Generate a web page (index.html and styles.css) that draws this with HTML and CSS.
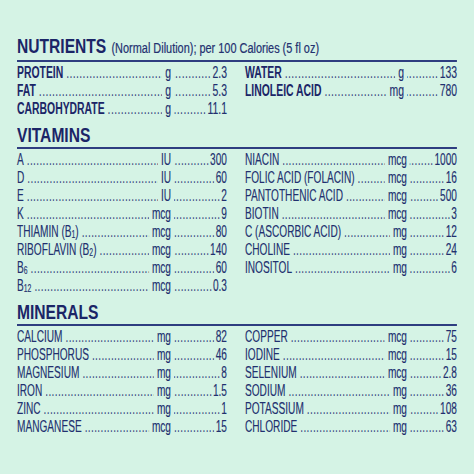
FILE: index.html
```html
<!DOCTYPE html>
<html lang="en">
<head>
<meta charset="utf-8">
<title>Nutrients</title>
<link rel="stylesheet" href="styles.css">
</head>
<body>
<main class="sheet">

  <h2 class="head scaled s-head first"><b class="title">NUTRIENTS</b> <span class="subtitle">(Normal Dilution); per 100 Calories (5 fl oz)</span></h2>
  <div class="list list-n scaled s-bold">
    <div class="col col-l">
      <div class="row"><span class="lead"><b class="name">PROTEIN</b><span class="dots"></span><span class="unit">g</span></span><span class="tail"><span class="dots r"></span><span class="val">2.3</span></span></div>
      <div class="row"><span class="lead"><b class="name">FAT</b><span class="dots"></span><span class="unit">g</span></span><span class="tail"><span class="dots r"></span><span class="val">5.3</span></span></div>
      <div class="row"><span class="lead"><b class="name">CARBOHYDRATE</b><span class="dots"></span><span class="unit">g</span></span><span class="tail"><span class="dots r"></span><span class="val">11.1</span></span></div>
    </div>
    <div class="col col-r">
      <div class="row"><span class="lead"><b class="name">WATER</b><span class="dots"></span><span class="unit">g</span></span><span class="tail"><span class="dots r"></span><span class="val">133</span></span></div>
      <div class="row"><span class="lead"><b class="name">LINOLEIC ACID</b><span class="dots"></span><span class="unit">mg</span></span><span class="tail"><span class="dots r"></span><span class="val">780</span></span></div>
    </div>
  </div>

  <h2 class="head scaled s-head"><b class="title">VITAMINS</b></h2>
  <div class="list scaled s-list">
    <div class="col col-l">
      <div class="row"><span class="lead"><span class="name">A</span><span class="dots"></span><span class="unit">IU</span></span><span class="tail"><span class="dots r"></span><span class="val">300</span></span></div>
      <div class="row"><span class="lead"><span class="name">D</span><span class="dots"></span><span class="unit">IU</span></span><span class="tail"><span class="dots r"></span><span class="val">60</span></span></div>
      <div class="row"><span class="lead"><span class="name">E</span><span class="dots"></span><span class="unit">IU</span></span><span class="tail"><span class="dots r"></span><span class="val">2</span></span></div>
      <div class="row"><span class="lead"><span class="name">K</span><span class="dots"></span><span class="unit">mcg</span></span><span class="tail"><span class="dots r"></span><span class="val">9</span></span></div>
      <div class="row"><span class="lead"><span class="name">THIAMIN (B<sub class="ss">1</sub>)</span><span class="dots"></span><span class="unit">mcg</span></span><span class="tail"><span class="dots r"></span><span class="val">80</span></span></div>
      <div class="row"><span class="lead"><span class="name">RIBOFLAVIN (B<sub class="ss">2</sub>)</span><span class="dots"></span><span class="unit">mcg</span></span><span class="tail"><span class="dots r"></span><span class="val">140</span></span></div>
      <div class="row"><span class="lead"><span class="name">B<sub class="ss">6</sub></span><span class="dots"></span><span class="unit">mcg</span></span><span class="tail"><span class="dots r"></span><span class="val">60</span></span></div>
      <div class="row"><span class="lead"><span class="name">B<sub class="ss">12</sub></span><span class="dots"></span><span class="unit">mcg</span></span><span class="tail"><span class="dots r"></span><span class="val">0.3</span></span></div>
    </div>
    <div class="col col-r">
      <div class="row"><span class="lead"><span class="name">NIACIN</span><span class="dots"></span><span class="unit">mcg</span></span><span class="tail"><span class="dots r"></span><span class="val">1000</span></span></div>
      <div class="row"><span class="lead"><span class="name">FOLIC ACID (FOLACIN)</span><span class="dots"></span><span class="unit">mcg</span></span><span class="tail"><span class="dots r"></span><span class="val">16</span></span></div>
      <div class="row"><span class="lead"><span class="name">PANTOTHENIC ACID</span><span class="dots"></span><span class="unit">mcg</span></span><span class="tail"><span class="dots r"></span><span class="val">500</span></span></div>
      <div class="row"><span class="lead"><span class="name">BIOTIN</span><span class="dots"></span><span class="unit">mcg</span></span><span class="tail"><span class="dots r"></span><span class="val">3</span></span></div>
      <div class="row"><span class="lead"><span class="name">C (ASCORBIC ACID)</span><span class="dots"></span><span class="unit">mg</span></span><span class="tail"><span class="dots r"></span><span class="val">12</span></span></div>
      <div class="row"><span class="lead"><span class="name">CHOLINE</span><span class="dots"></span><span class="unit">mg</span></span><span class="tail"><span class="dots r"></span><span class="val">24</span></span></div>
      <div class="row"><span class="lead"><span class="name">INOSITOL</span><span class="dots"></span><span class="unit">mg</span></span><span class="tail"><span class="dots r"></span><span class="val">6</span></span></div>
    </div>
  </div>

  <h2 class="head scaled s-head"><b class="title">MINERALS</b></h2>
  <div class="list scaled s-list">
    <div class="col col-l">
      <div class="row"><span class="lead"><span class="name">CALCIUM</span><span class="dots"></span><span class="unit">mg</span></span><span class="tail"><span class="dots r"></span><span class="val">82</span></span></div>
      <div class="row"><span class="lead"><span class="name">PHOSPHORUS</span><span class="dots"></span><span class="unit">mg</span></span><span class="tail"><span class="dots r"></span><span class="val">46</span></span></div>
      <div class="row"><span class="lead"><span class="name">MAGNESIUM</span><span class="dots"></span><span class="unit">mg</span></span><span class="tail"><span class="dots r"></span><span class="val">8</span></span></div>
      <div class="row"><span class="lead"><span class="name">IRON</span><span class="dots"></span><span class="unit">mg</span></span><span class="tail"><span class="dots r"></span><span class="val">1.5</span></span></div>
      <div class="row"><span class="lead"><span class="name">ZINC</span><span class="dots"></span><span class="unit">mg</span></span><span class="tail"><span class="dots r"></span><span class="val">1</span></span></div>
      <div class="row"><span class="lead"><span class="name">MANGANESE</span><span class="dots"></span><span class="unit">mcg</span></span><span class="tail"><span class="dots r"></span><span class="val">15</span></span></div>
    </div>
    <div class="col col-r">
      <div class="row"><span class="lead"><span class="name">COPPER</span><span class="dots"></span><span class="unit">mcg</span></span><span class="tail"><span class="dots r"></span><span class="val">75</span></span></div>
      <div class="row"><span class="lead"><span class="name">IODINE</span><span class="dots"></span><span class="unit">mcg</span></span><span class="tail"><span class="dots r"></span><span class="val">15</span></span></div>
      <div class="row"><span class="lead"><span class="name">SELENIUM</span><span class="dots"></span><span class="unit">mcg</span></span><span class="tail"><span class="dots r"></span><span class="val">2.8</span></span></div>
      <div class="row"><span class="lead"><span class="name">SODIUM</span><span class="dots"></span><span class="unit">mg</span></span><span class="tail"><span class="dots r"></span><span class="val">36</span></span></div>
      <div class="row"><span class="lead"><span class="name">POTASSIUM</span><span class="dots"></span><span class="unit">mg</span></span><span class="tail"><span class="dots r"></span><span class="val">108</span></span></div>
      <div class="row"><span class="lead"><span class="name">CHLORIDE</span><span class="dots"></span><span class="unit">mg</span></span><span class="tail"><span class="dots r"></span><span class="val">63</span></span></div>
    </div>
  </div>

</main>
</body>
</html>
```

FILE: styles.css
```css
html, body {
  margin: 0;
  padding: 0;
  overflow: hidden;
}

body {
  width: 474px;
  height: 474px;
  background: #d5f3e5;
  color: #22306f;
  font-family: "Liberation Sans", Arial, sans-serif;
}

.sheet {
  width: 440px;
  padding: 34px 17px 0 17px;
}

/* horizontally condensed blocks (the source uses a condensed face) */
.scaled {
  width: calc(100% / var(--s));
  transform: scaleX(var(--s));
  transform-origin: 0 0;
}
.s-head { --s: 0.78; }
.s-bold { --s: 0.65; }
.s-list { --s: 0.595; }

.head {
  margin: 5px 0 0 0;
  padding-bottom: 1px;
  border-bottom: 2px solid #2e3d80;
  line-height: 22px;
  font-weight: normal;
  white-space: nowrap;
}
.head.first { margin-top: 0; }

.title {
  font-size: 20px;
  font-weight: 700;
  color: #1b2567;
}

.subtitle {
  font-size: 14px;
  color: #243170;
  -webkit-text-stroke: 0.2px #243170;
}

.list {
  margin-top: 2px;
  display: grid;
  grid-template-columns: 210fr 212fr;
  column-gap: calc(18px / var(--s));
  font-size: 17px;
  line-height: 18px;
  -webkit-text-stroke: 0.15px #22306f;
}

.list-n { font-size: 16px; }

.col-l { --tail: calc(56px / var(--s)); }
.col-r { --tail: calc(50px / var(--s)); }
.list-n .col-r { --tail: calc(53px / var(--s)); }

.row {
  display: grid;
  grid-template-columns: 1fr var(--tail);
  height: 18px;
  white-space: nowrap;
}

.lead, .tail {
  display: flex;
  min-width: 0;
}

.name {
  flex: none;
}
b.name {
  font-weight: 700;
  color: #1b2567;
  -webkit-text-stroke: 0;
}

.unit, .val {
  flex: none;
}

.dots {
  flex: 1 1 auto;
  min-width: 0;
  overflow: hidden;
  letter-spacing: 0.6px;
  color: #34427e;
  -webkit-text-stroke: 0;
  margin: 0 calc(3px / var(--s)) 0 calc(3px / var(--s));
}
.dots::before {
  content: "....................................................................................................";
}
.dots.r {
  direction: rtl;
  margin: 0 calc(1px / var(--s)) 0 calc(3px / var(--s));
}

.ss {
  font-size: 0.68em;
  vertical-align: -1px;
  line-height: 0;
}
```
